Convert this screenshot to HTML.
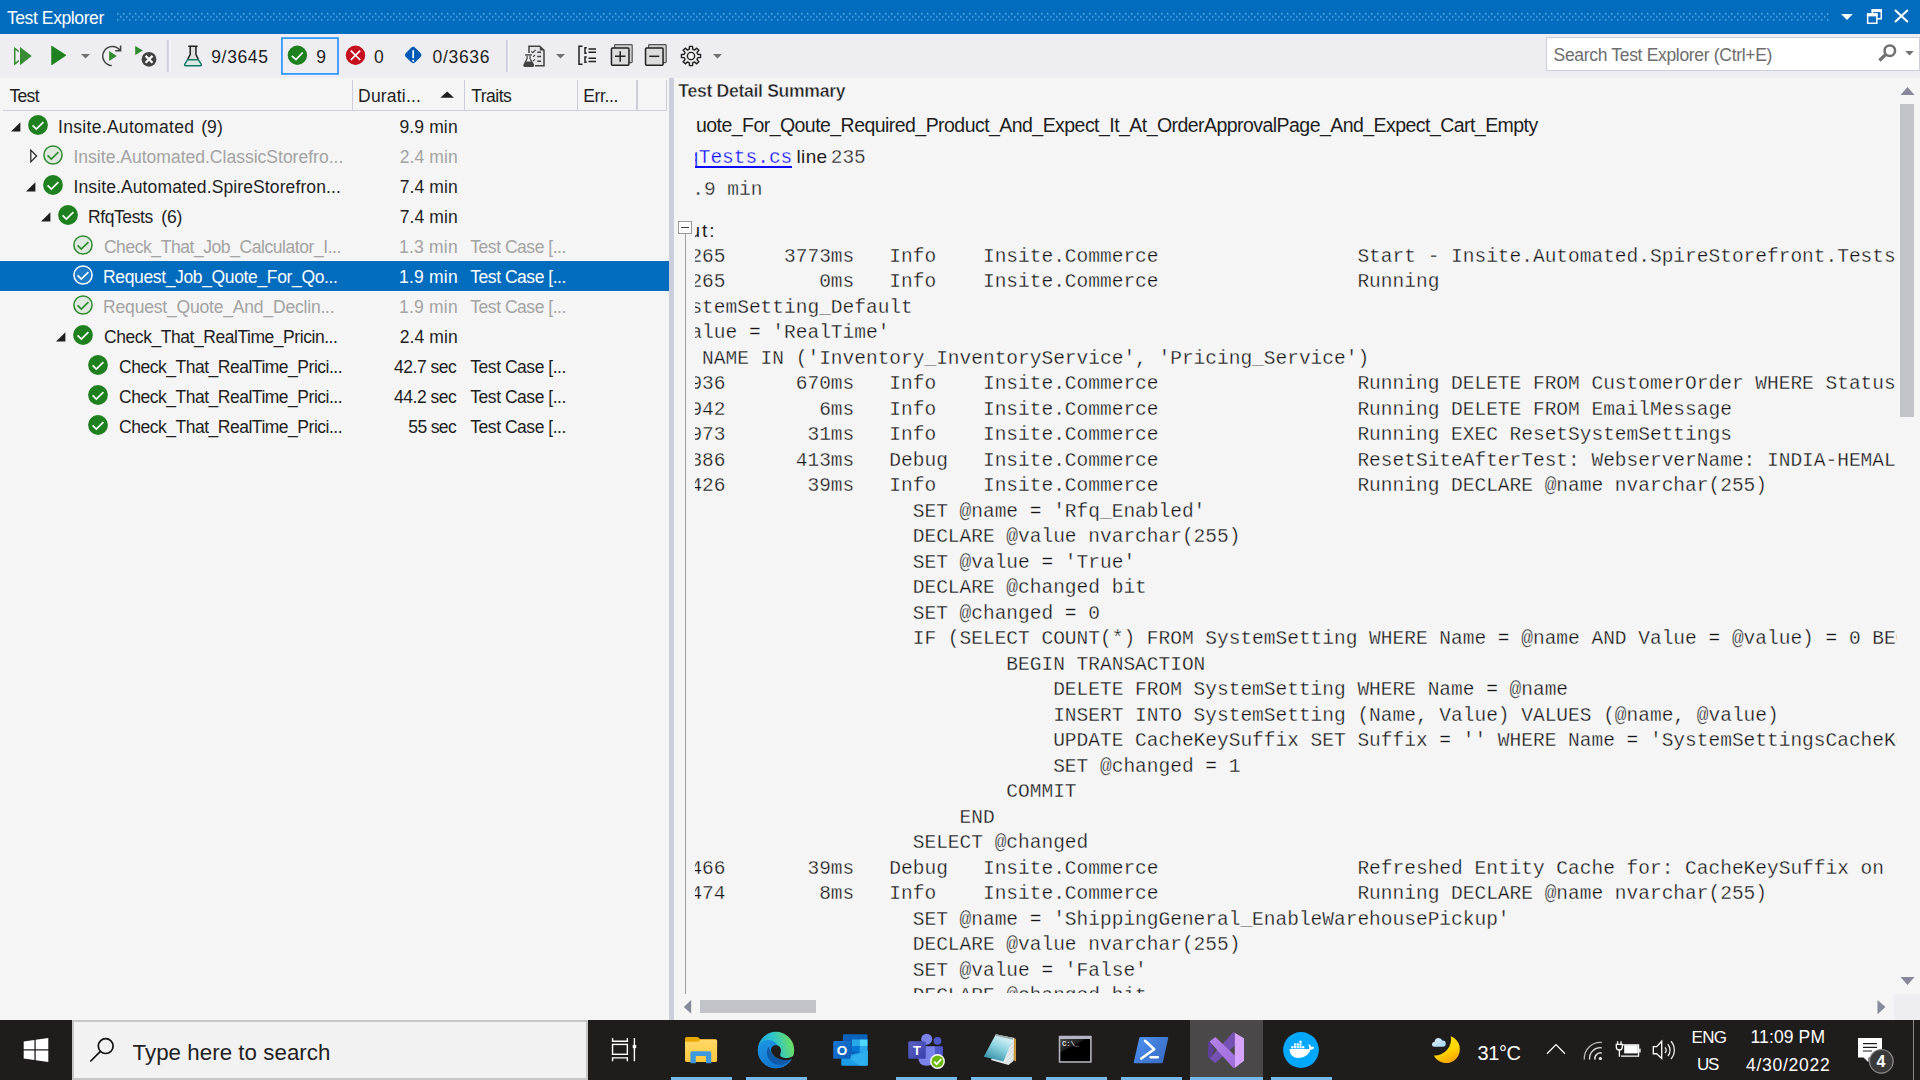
<!DOCTYPE html>
<html lang="en"><head><meta charset="utf-8"><title>Test Explorer</title>
<style>
*{box-sizing:border-box;margin:0;padding:0}
html,body{width:1920px;height:1080px;overflow:hidden;background:#f5f5f5;font-family:"Liberation Sans",sans-serif;color:#1e1e1e}
.t{position:absolute;white-space:pre;line-height:1}
.abs{position:absolute}
#titlebar{position:absolute;left:0;top:0;width:1920px;height:34px;background:#006cbe}
#toolbar{position:absolute;left:0;top:34px;width:1920px;height:44px;background:#eeeef2}
#left{position:absolute;left:0;top:78px;width:669px;height:942px;background:#f5f5f5;overflow:hidden}
#splitter{position:absolute;left:669px;top:78px;width:4.5px;height:942px;background:#ccceDB}
#right{position:absolute;left:673.5px;top:78px;width:1246.5px;height:942px;background:#f5f5f5;overflow:hidden}
#taskbar{position:absolute;left:0;top:1020px;width:1920px;height:60px;background:#1f1c1c}
.hsep{position:absolute;top:2px;width:1.6px;height:31px;background:#ccceDB}
.row{position:absolute;left:0;width:669px;height:30px}
.row.sel{background:#006cbe}
svg{position:absolute;overflow:visible}
#log{position:absolute;white-space:pre;font-family:"Liberation Mono",monospace;font-size:19.5px;line-height:25.5px;color:#141414;-webkit-text-stroke:0.3px #f5f5f5}
#clip{position:absolute;left:21.5px;top:26px;width:1201.5px;height:889px;overflow:hidden}
</style></head>
<body>
<div id="titlebar"><span class="t" style="left:6.90px;top:9.50px;font-size:17.5px;letter-spacing:-0.399px;color:#fff;">Test Explorer</span><svg id="tb-svg" width="1920" height="34" viewBox="0 0 1920 34"><defs><pattern id="grip" x="117" y="13" width="6" height="6.2" patternUnits="userSpaceOnUse"><rect x="0" y="0" width="1.5" height="1.5" fill="#6aaee6"/><rect x="3" y="3.1" width="1.5" height="1.5" fill="#6aaee6"/></pattern></defs>
<rect x="117" y="13" width="1712" height="7.8" fill="url(#grip)"/>
<path d="M1841.1 14 L1852.8 14 L1846.95 20 Z" fill="#fff"/>
<g fill="none" stroke="#fff" stroke-width="1.5"><rect x="1872.35" y="9.85" width="8.9" height="8.9"/><rect x="1867.65" y="14.05" width="9.2" height="9.2" fill="#006cbe"/></g>
<rect x="1871.6" y="9.1" width="10.4" height="3" fill="#fff"/><rect x="1866.9" y="13.3" width="10.7" height="3.1" fill="#fff"/>
<path d="M1895 9.9 L1907.8 21.9 M1907.8 9.9 L1895 21.9" stroke="#fff" stroke-width="2.1" fill="none"/>
</svg></div>
<div id="toolbar"><span class="t" style="left:211.25px;top:14.75px;font-size:17.5px;letter-spacing:0.641px;color:#1e1e1e;">9/3645</span><span class="t" style="left:316.25px;top:14.75px;font-size:17.5px;color:#1e1e1e;">9</span><span class="t" style="left:374.00px;top:14.75px;font-size:17.5px;color:#1e1e1e;">0</span><span class="t" style="left:432.50px;top:14.75px;font-size:17.5px;letter-spacing:0.691px;color:#1e1e1e;">0/3636</span><div class="abs" id="search" style="left:1545.5px;top:3.1px;width:374.5px;height:33.8px;background:#fff;border:1.9px solid #ccceDB"></div><svg id="tool-svg" style="left:0;top:0" width="1920" height="44" viewBox="0 34 1920 44"><g id="ic-runall"><path d="M14.75 48.4 L14.75 63.9 L25 56.1 Z" fill="none" stroke="#388a34" stroke-width="1.5"/><path d="M20 47 L20 65.25 L31.75 56.1 Z" fill="#388a34" stroke="#eeeef2" stroke-width="2.4" paint-order="stroke"/></g>
<path id="ic-run" d="M51.25 46.3 Q51.25 45.4 52.1 45.9 L65.8 54.8 Q66.5 55.3 65.8 55.8 L52.1 64.9 Q51.25 65.4 51.25 64.6 Z" fill="#1f801f"/>
<path d="M81 54 L90 54 L85.5 58.6 Z" fill="#717171"/>
<g id="ic-repeat"><path d="M120.3 50.6 A9.6 9.6 0 1 0 111.8 65.6" fill="none" stroke="#424242" stroke-width="1.45"/><path d="M120.6 45.5 L120.6 50.8 L115.2 50.8" fill="none" stroke="#424242" stroke-width="1.5"/><path d="M109.1 51.1 L109.1 60.9 L116.8 56.1 Z" fill="#2e8b2e"/></g>
<g id="ic-runx"><path d="M135.2 46.1 L135.2 54.9 L142.9 50.4 Z" fill="#2e8b2e"/><circle cx="149" cy="59.35" r="7.4" fill="#424242" stroke="#eeeef2" stroke-width="1.6" paint-order="stroke"/><path d="M145.6 55.9 L152.5 62.8 M152.5 55.9 L145.6 62.8" stroke="#fff" stroke-width="2.2" fill="none"/></g>
<rect x="167" y="40" width="1.9" height="32" fill="#ccceDB"/><rect x="168.9" y="40" width="1.6" height="32" fill="#f7f7f9"/>
<g id="ic-flask"><path d="M190.2 47 L190.2 54.5 L187.5 59.4 L198.2 59.4 L195.95 54.5 L195.95 47 Z" fill="#e0e0e0"/><path d="M188.25 46.25 L197.5 46.25 M190.2 47 L190.2 54.6 L187.7 59.2 M195.95 47 L195.95 54.6 L198.3 59.2" fill="none" stroke="#212121" stroke-width="1.5"/><path d="M187.6 59.7 L198.3 59.7 L201.3 64.4 Q201.8 65.75 200.3 65.75 L185.7 65.75 Q184.2 65.75 184.7 64.4 Z" fill="#dce8e4" stroke="#117865" stroke-width="1.5" stroke-linejoin="round"/></g>
<rect x="281.9" y="38.1" width="56.1" height="35.8" fill="none" stroke="#3399ff" stroke-width="1.8"/>
<g id="ic-pass"><circle cx="297.4" cy="55.25" r="9.7" fill="#1f801f"/><path d="M291.8 55.8 L296 59.6 L302.7 52.5" fill="none" stroke="#fff" stroke-width="1.7"/></g>
<g id="ic-fail"><circle cx="355.5" cy="55.25" r="9.7" fill="#c50f1f"/><path d="M350.8 50.6 L360.2 60 M360.2 50.6 L350.8 60" fill="none" stroke="#fff" stroke-width="1.7"/></g>
<g id="ic-notrun"><rect x="406.6" y="48.4" width="13.2" height="13.2" rx="3.2" transform="rotate(45 413.2 55)" fill="#005ab5"/><path d="M413.2 50.2 L413.2 58.2" stroke="#fff" stroke-width="1.7"/><circle cx="413.2" cy="60.7" r="1" fill="#fff"/></g>
<rect x="506" y="40" width="1.9" height="32" fill="#ccceDB"/><rect x="507.9" y="40" width="1.6" height="32" fill="#f7f7f9"/>
<g id="ic-playlist"><path d="M529 53 L529 46.25 L539.8 46.25 L544 50.4 L544 65.75 L535 65.75 L535 53 Z" fill="#e6e6ea"/><path d="M529 53 L529 46.25 L539.8 46.25 L544 50.4 L544 65.75 L535 65.75" fill="none" stroke="#424242" stroke-width="1.5"/><path d="M539.8 46.25 L539.8 50.4 L544 50.4 Z" fill="#424242"/><path d="M537.25 52.25 H541 M537.25 56.5 H541 M537.25 61.25 H541" stroke="#424242" stroke-width="1.3"/><path d="M531.3 51.4 L532.7 52.7 L535.6 50 M533 56.8 L535 55 M533 61.2 L535 59.4" fill="none" stroke="#424242" stroke-width="1.1"/><path d="M525 54.9 H532" stroke="#424242" stroke-width="1.3"/><path d="M527.1 55.5 V58.6 L524 64.6 Q523.5 66.5 525 66.5 L532.3 66.5 Q534 66.5 533.4 64.6 L530 58.6 V55.5" fill="none" stroke="#424242" stroke-width="1.2"/><path d="M525.6 61.6 L531.6 61.6 L533.4 64.6 Q534 66.5 532.3 66.5 L525 66.5 Q523.5 66.5 524 64.6 Z" fill="#424242"/></g>
<path d="M556 54 L565 54 L560.5 58.6 Z" fill="#717171"/>
<g id="ic-group" fill="none" stroke="#212121" stroke-width="1.5"><path d="M582.5 46.25 H579 V64.3 H582.5"/><path d="M586.75 47.75 H585 V53.3 H586.75 M586.75 57 H585 V62.3 H586.75"/><path d="M588.5 49.1 H596 M588.5 52.25 H596 M588.5 58.25 H596 M588.5 61.4 H596"/></g>
<g id="ic-expand"><rect x="614.6" y="44.7" width="17.6" height="17.9" rx="0.8" fill="#d0d0d0" stroke="#555" stroke-width="1.2"/><rect x="611.45" y="48.05" width="17.5" height="17.2" rx="1" fill="#dcdcdc" stroke="#212121" stroke-width="1.5"/><path d="M615 56.3 H625.5 M620.2 51.3 V61.7" stroke="#212121" stroke-width="1.5"/></g>
<g id="ic-collapse"><rect x="648.6" y="44.7" width="17.6" height="17.9" rx="0.8" fill="#d0d0d0" stroke="#555" stroke-width="1.2"/><rect x="645.55" y="48.05" width="17.5" height="17.2" rx="1" fill="#dcdcdc" stroke="#212121" stroke-width="1.5"/><path d="M649.2 56.3 H659.3" stroke="#212121" stroke-width="1.5"/></g>
<g id="ic-gear"><path d="M689.34 49.20 L689.45 46.42 L692.55 46.42 L692.66 49.20 L694.63 50.02 L696.68 48.14 L698.86 50.32 L696.98 52.37 L697.80 54.34 L700.58 54.45 L700.58 57.55 L697.80 57.66 L696.98 59.63 L698.86 61.68 L696.68 63.86 L694.63 61.98 L692.66 62.80 L692.55 65.58 L689.45 65.58 L689.34 62.80 L687.37 61.98 L685.32 63.86 L683.14 61.68 L685.02 59.63 L684.20 57.66 L681.42 57.55 L681.42 54.45 L684.20 54.34 L685.02 52.37 L683.14 50.32 L685.32 48.14 L687.37 50.02 Z" fill="#e8e8e8" stroke="#212121" stroke-width="1.4" stroke-linejoin="round"/><circle cx="691" cy="56" r="3.6" fill="#f4f4f4" stroke="#212121" stroke-width="1.4"/></g>
<path d="M713 54 L721.9 54 L717.45 58.6 Z" fill="#717171"/>
<g id="ic-search"><circle cx="1889.8" cy="50.7" r="5.25" fill="none" stroke="#717171" stroke-width="2.6"/><path d="M1886 54.3 L1879.4 60.5" stroke="#717171" stroke-width="3.3"/></g>
<path d="M1905.2 50.9 L1913.75 50.9 L1909.5 55.5 Z" fill="#717171"/>
</svg><span class="t" style="left:1553.60px;top:13.40px;font-size:17.5px;letter-spacing:-0.322px;color:#6d6d6d;">Search Test Explorer (Ctrl+E)</span></div>
<div id="left"><div class="abs" id="hdr" style="left:0;top:0;width:669px;height:33px"><div class="hsep" style="left:351.6px"></div><div class="hsep" style="left:463.9px"></div><div class="hsep" style="left:576.8px"></div><div class="hsep" style="left:636.4px"></div><div class="hsep" style="left:665.5px"></div><div class="abs" style="left:3px;top:31.6px;width:664px;height:1.5px;background:#ccceDB"></div><span class="t" style="left:9.40px;top:9.90px;font-size:17.5px;letter-spacing:-0.628px;color:#1e1e1e;">Test</span><span class="t" style="left:358.10px;top:9.90px;font-size:17.5px;letter-spacing:0.187px;color:#1e1e1e;">Durati...</span><span class="t" style="left:471.30px;top:9.90px;font-size:17.5px;letter-spacing:-0.530px;color:#1e1e1e;">Traits</span><span class="t" style="left:583.30px;top:9.90px;font-size:17.5px;letter-spacing:-0.377px;color:#1e1e1e;">Err...</span><svg style="left:440px;top:13px" width="15" height="8" viewBox="440 91 15 8"><path d="M440.3 97.8 L447.15 91.4 L454 97.8 Z" fill="#1e1e1e"/></svg></div><div class="row" style="top:33px"><svg style="left:10.9px;top:11px" width="10" height="10" viewBox="0 0 10 10"><path d="M9.4 0.2 L9.4 9.5 L0 9.5 Z" fill="#1e1e1e"/></svg><svg style="left:27.4px;top:3.4px" width="22" height="22" viewBox="0 0 22 22"><circle cx="11" cy="11" r="9.9" fill="#1f801f"/><path d="M5.6 11.3 L9.3 15 L16.4 8.1" fill="none" stroke="#fff" stroke-width="1.7"/></svg><span class="t" style="left:58.10px;top:7.75px;font-size:17.5px;letter-spacing:0.300px;color:#1e1e1e;">Insite.Automated</span><span class="t" style="left:201.20px;top:7.75px;font-size:17.5px;letter-spacing:0.070px;color:#1e1e1e;">(9)</span><span class="t" style="left:399.40px;top:7.75px;font-size:17.5px;letter-spacing:0.141px;color:#1e1e1e;">9.9 min</span></div><div class="row" style="top:63px"><svg style="left:30.2px;top:8px" width="8" height="14" viewBox="0 0 8 14"><path d="M0.8 1.2 L6.6 7 L0.8 12.8 Z" fill="#f5f5f5" stroke="#1e1e1e" stroke-width="1.2"/></svg><svg style="left:42.4px;top:3.4px" width="22" height="22" viewBox="0 0 22 22"><circle cx="11" cy="11" r="9.1" fill="#dfe9df" stroke="#2f8a2f" stroke-width="1.5"/><path d="M5.6 11.3 L9.3 15 L16.4 8.1" fill="none" stroke="#2f8a2f" stroke-width="1.7"/></svg><span class="t" style="left:73.50px;top:7.75px;font-size:17.5px;letter-spacing:0.010px;color:#a3a3a3;">Insite.Automated.ClassicStorefro...</span><span class="t" style="left:399.80px;top:7.75px;font-size:17.5px;letter-spacing:0.074px;color:#a3a3a3;">2.4 min</span></div><div class="row" style="top:93px"><svg style="left:25.9px;top:11px" width="10" height="10" viewBox="0 0 10 10"><path d="M9.4 0.2 L9.4 9.5 L0 9.5 Z" fill="#1e1e1e"/></svg><svg style="left:42.4px;top:3.4px" width="22" height="22" viewBox="0 0 22 22"><circle cx="11" cy="11" r="9.9" fill="#1f801f"/><path d="M5.6 11.3 L9.3 15 L16.4 8.1" fill="none" stroke="#fff" stroke-width="1.7"/></svg><span class="t" style="left:73.50px;top:7.75px;font-size:17.5px;letter-spacing:0.114px;color:#1e1e1e;">Insite.Automated.SpireStorefron...</span><span class="t" style="left:399.80px;top:7.75px;font-size:17.5px;letter-spacing:0.074px;color:#1e1e1e;">7.4 min</span></div><div class="row" style="top:123px"><svg style="left:40.9px;top:11px" width="10" height="10" viewBox="0 0 10 10"><path d="M9.4 0.2 L9.4 9.5 L0 9.5 Z" fill="#1e1e1e"/></svg><svg style="left:57.4px;top:3.4px" width="22" height="22" viewBox="0 0 22 22"><circle cx="11" cy="11" r="9.9" fill="#1f801f"/><path d="M5.6 11.3 L9.3 15 L16.4 8.1" fill="none" stroke="#fff" stroke-width="1.7"/></svg><span class="t" style="left:88.10px;top:7.75px;font-size:17.5px;letter-spacing:-0.432px;color:#1e1e1e;">RfqTests</span><span class="t" style="left:161.20px;top:7.75px;font-size:17.5px;letter-spacing:-0.080px;color:#1e1e1e;">(6)</span><span class="t" style="left:399.80px;top:7.75px;font-size:17.5px;letter-spacing:0.074px;color:#1e1e1e;">7.4 min</span></div><div class="row" style="top:153px"><svg style="left:72.4px;top:3.4px" width="22" height="22" viewBox="0 0 22 22"><circle cx="11" cy="11" r="9.1" fill="#dfe9df" stroke="#2f8a2f" stroke-width="1.5"/><path d="M5.6 11.3 L9.3 15 L16.4 8.1" fill="none" stroke="#2f8a2f" stroke-width="1.7"/></svg><span class="t" style="left:103.90px;top:7.75px;font-size:17.5px;letter-spacing:-0.432px;color:#a3a3a3;">Check_That_Job_Calculator_I...</span><span class="t" style="left:399.10px;top:7.75px;font-size:17.5px;letter-spacing:0.191px;color:#a3a3a3;">1.3 min</span><span class="t" style="left:470.30px;top:7.75px;font-size:17.5px;letter-spacing:-0.466px;color:#a3a3a3;">Test Case [...</span></div><div class="row sel" style="top:183px"><svg style="left:72.4px;top:3.4px" width="22" height="22" viewBox="0 0 22 22"><circle cx="11" cy="11" r="9.1" fill="#1f7cc8" stroke="#fff" stroke-width="1.5"/><path d="M5.6 11.3 L9.3 15 L16.4 8.1" fill="none" stroke="#fff" stroke-width="1.7"/></svg><span class="t" style="left:103.10px;top:7.75px;font-size:17.5px;letter-spacing:-0.362px;color:#fff;">Request_Job_Quote_For_Qo...</span><span class="t" style="left:399.10px;top:7.75px;font-size:17.5px;letter-spacing:0.191px;color:#fff;">1.9 min</span><span class="t" style="left:470.30px;top:7.75px;font-size:17.5px;letter-spacing:-0.466px;color:#fff;">Test Case [...</span></div><div class="row" style="top:213px"><svg style="left:72.4px;top:3.4px" width="22" height="22" viewBox="0 0 22 22"><circle cx="11" cy="11" r="9.1" fill="#dfe9df" stroke="#2f8a2f" stroke-width="1.5"/><path d="M5.6 11.3 L9.3 15 L16.4 8.1" fill="none" stroke="#2f8a2f" stroke-width="1.7"/></svg><span class="t" style="left:103.10px;top:7.75px;font-size:17.5px;letter-spacing:-0.186px;color:#a3a3a3;">Request_Quote_And_Declin...</span><span class="t" style="left:399.10px;top:7.75px;font-size:17.5px;letter-spacing:0.191px;color:#a3a3a3;">1.9 min</span><span class="t" style="left:470.30px;top:7.75px;font-size:17.5px;letter-spacing:-0.466px;color:#a3a3a3;">Test Case [...</span></div><div class="row" style="top:243px"><svg style="left:55.9px;top:11px" width="10" height="10" viewBox="0 0 10 10"><path d="M9.4 0.2 L9.4 9.5 L0 9.5 Z" fill="#1e1e1e"/></svg><svg style="left:72.4px;top:3.4px" width="22" height="22" viewBox="0 0 22 22"><circle cx="11" cy="11" r="9.9" fill="#1f801f"/><path d="M5.6 11.3 L9.3 15 L16.4 8.1" fill="none" stroke="#fff" stroke-width="1.7"/></svg><span class="t" style="left:104.10px;top:7.75px;font-size:17.5px;letter-spacing:-0.451px;color:#1e1e1e;">Check_That_RealTime_Pricin...</span><span class="t" style="left:399.80px;top:7.75px;font-size:17.5px;letter-spacing:0.074px;color:#1e1e1e;">2.4 min</span></div><div class="row" style="top:273px"><svg style="left:87.4px;top:3.4px" width="22" height="22" viewBox="0 0 22 22"><circle cx="11" cy="11" r="9.9" fill="#1f801f"/><path d="M5.6 11.3 L9.3 15 L16.4 8.1" fill="none" stroke="#fff" stroke-width="1.7"/></svg><span class="t" style="left:119.10px;top:7.75px;font-size:17.5px;letter-spacing:-0.489px;color:#1e1e1e;">Check_That_RealTime_Prici...</span><span class="t" style="left:394.10px;top:7.75px;font-size:17.5px;letter-spacing:-0.515px;color:#1e1e1e;">42.7 sec</span><span class="t" style="left:470.30px;top:7.75px;font-size:17.5px;letter-spacing:-0.466px;color:#1e1e1e;">Test Case [...</span></div><div class="row" style="top:303px"><svg style="left:87.4px;top:3.4px" width="22" height="22" viewBox="0 0 22 22"><circle cx="11" cy="11" r="9.9" fill="#1f801f"/><path d="M5.6 11.3 L9.3 15 L16.4 8.1" fill="none" stroke="#fff" stroke-width="1.7"/></svg><span class="t" style="left:119.10px;top:7.75px;font-size:17.5px;letter-spacing:-0.489px;color:#1e1e1e;">Check_That_RealTime_Prici...</span><span class="t" style="left:394.10px;top:7.75px;font-size:17.5px;letter-spacing:-0.515px;color:#1e1e1e;">44.2 sec</span><span class="t" style="left:470.30px;top:7.75px;font-size:17.5px;letter-spacing:-0.466px;color:#1e1e1e;">Test Case [...</span></div><div class="row" style="top:333px"><svg style="left:87.4px;top:3.4px" width="22" height="22" viewBox="0 0 22 22"><circle cx="11" cy="11" r="9.9" fill="#1f801f"/><path d="M5.6 11.3 L9.3 15 L16.4 8.1" fill="none" stroke="#fff" stroke-width="1.7"/></svg><span class="t" style="left:119.10px;top:7.75px;font-size:17.5px;letter-spacing:-0.489px;color:#1e1e1e;">Check_That_RealTime_Prici...</span><span class="t" style="left:408.30px;top:7.75px;font-size:17.5px;letter-spacing:-0.642px;color:#1e1e1e;">55 sec</span><span class="t" style="left:470.30px;top:7.75px;font-size:17.5px;letter-spacing:-0.466px;color:#1e1e1e;">Test Case [...</span></div></div>
<div id="splitter"></div>
<div id="right"><span class="t" style="left:4.80px;top:4.80px;font-size:17.6px;letter-spacing:-0.309px;color:#1e1e1e;font-weight:700;-webkit-text-stroke:0.4px #f5f5f5;">Test Detail Summary</span><div id="clip"><span class="t" style="left:1.00px;top:12.20px;font-size:19.5px;letter-spacing:-0.549px;color:#1e1e1e;">uote_For_Qoute_Required_Product_And_Expect_It_At_OrderApprovalPage_And_Expect_Cart_Empty</span><span class="t" style="left:-8.00px;top:44.60px;font-size:19.5px;color:#0a0aff;font-family:'Liberation Mono', monospace;-webkit-text-stroke:0.3px #f5f5f5;">qTests.cs</span><div class="abs" style="left:0;top:62.3px;width:97.3px;height:1.5px;background:#0a0aff"></div><span class="t" style="left:101.50px;top:42.60px;font-size:19px;letter-spacing:0.364px;color:#1e1e1e;">line</span><span class="t" style="left:135.70px;top:44.60px;font-size:19.5px;color:#1e1e1e;font-family:'Liberation Mono', monospace;-webkit-text-stroke:0.3px #f5f5f5;">235</span><span class="t" style="left:-14.50px;top:76.70px;font-size:19.5px;color:#1e1e1e;font-family:'Liberation Mono', monospace;-webkit-text-stroke:0.3px #f5f5f5;">1.9 min</span><span class="t" style="left:-5.60px;top:117.10px;font-size:19px;letter-spacing:2.027px;color:#1e1e1e;">ut:</span><pre id="log" style="left:-4.60px;top:115.05px"> 
265     3773ms   Info    Insite.Commerce                 Start - Insite.Automated.SpireStorefront.Tests
265        0ms   Info    Insite.Commerce                 Running
stemSetting_Default
alue = 'RealTime'
 NAME IN ('Inventory_InventoryService', 'Pricing_Service')
936      670ms   Info    Insite.Commerce                 Running DELETE FROM CustomerOrder WHERE Status
942        6ms   Info    Insite.Commerce                 Running DELETE FROM EmailMessage
973       31ms   Info    Insite.Commerce                 Running EXEC ResetSystemSettings
386      413ms   Debug   Insite.Commerce                 ResetSiteAfterTest: WebserverName: INDIA-HEMAL
426       39ms   Info    Insite.Commerce                 Running DECLARE @name nvarchar(255)
                   SET @name = 'Rfq_Enabled'
                   DECLARE @value nvarchar(255)
                   SET @value = 'True'
                   DECLARE @changed bit
                   SET @changed = 0
                   IF (SELECT COUNT(*) FROM SystemSetting WHERE Name = @name AND Value = @value) = 0 BEGIN
                           BEGIN TRANSACTION
                               DELETE FROM SystemSetting WHERE Name = @name
                               INSERT INTO SystemSetting (Name, Value) VALUES (@name, @value)
                               UPDATE CacheKeySuffix SET Suffix = '' WHERE Name = 'SystemSettingsCacheKeySuffix'
                               SET @changed = 1
                           COMMIT
                       END
                   SELECT @changed
466       39ms   Debug   Insite.Commerce                 Refreshed Entity Cache for: CacheKeySuffix on
474        8ms   Info    Insite.Commerce                 Running DECLARE @name nvarchar(255)
                   SET @name = 'ShippingGeneral_EnableWarehousePickup'
                   DECLARE @value nvarchar(255)
                   SET @value = 'False'
                   DECLARE @changed bit</pre></div><div class="abs" style="left:11.1px;top:156.0px;width:1.3px;height:760px;background:#a0a0a0"></div><div class="abs" style="left:4.8px;top:142.7px;width:13.4px;height:13.5px;background:#fcfcfc;border:1.3px solid #9a9a9a"></div><div class="abs" style="left:7.7px;top:148.8px;width:7.4px;height:1.5px;background:#3c3c3c"></div><div class="abs" style="left:1226.5px;top:26.0px;width:13.9px;height:312.8px;background:#c2c3c9"></div><div class="abs" style="left:26.5px;top:922.0px;width:115.8px;height:13.3px;background:#c2c3c9"></div><div class="abs" style="left:1220.7px;top:916.0px;width:26px;height:26px;background:#eeeef2"></div><svg style="left:0;top:0" width="1246.5" height="942" viewBox="673.5 78 1246.5 942"><g fill="#868999"><path d="M1900 95 L1907 87 L1914 95 Z"/><path d="M1900 977 L1914 977 L1907 985 Z"/><path d="M690.7 1000 L690.7 1013.8 L683.3 1006.9 Z"/><path d="M1877 1000 L1877 1014.2 L1885 1007.1 Z"/></g></svg></div>
<div id="taskbar"><div class="abs" id="tsearch" style="left:72px;top:0;width:516px;height:60px;background:#f2f2f2;border:2px solid #c6c6c6"></div><span class="t" style="left:132.50px;top:21.70px;font-size:22.3px;letter-spacing:0.046px;color:#222;">Type here to search</span><div class="abs" style="left:1190px;top:0;width:73px;height:60px;background:#4a4848"></div><div class="abs run" style="left:671.0px;top:57px;width:61.0px;height:3px;background:#76b9ed"></div><div class="abs run" style="left:745.8px;top:57px;width:61.2px;height:3px;background:#76b9ed"></div><div class="abs run" style="left:896.0px;top:57px;width:61.0px;height:3px;background:#76b9ed"></div><div class="abs run" style="left:971.0px;top:57px;width:61.0px;height:3px;background:#76b9ed"></div><div class="abs run" style="left:1045.8px;top:57px;width:61.2px;height:3px;background:#76b9ed"></div><div class="abs run" style="left:1120.8px;top:57px;width:61.2px;height:3px;background:#76b9ed"></div><div class="abs run" style="left:1190.0px;top:57px;width:73.0px;height:3px;background:#76b9ed"></div><div class="abs run" style="left:1271.0px;top:57px;width:61.0px;height:3px;background:#76b9ed"></div><svg id="task-svg" style="left:0;top:0" width="1920" height="60" viewBox="0 1020 1920 60"><defs>
<linearGradient id="g-fold" x1="0" y1="0" x2="0" y2="1"><stop offset="0" stop-color="#ffd968"/><stop offset="1" stop-color="#ffc83d"/></linearGradient>
<linearGradient id="g-edge1" x1="0" y1="0.6" x2="1" y2="0.3"><stop offset="0" stop-color="#1b9de2"/><stop offset="0.5" stop-color="#2ec4cc"/><stop offset="1" stop-color="#6fe05a"/></linearGradient>
<linearGradient id="g-edge2" x1="0" y1="0" x2="0.6" y2="1"><stop offset="0" stop-color="#1c97e3"/><stop offset="1" stop-color="#1273cc"/></linearGradient>
<linearGradient id="g-ol" x1="0" y1="0" x2="1" y2="1"><stop offset="0" stop-color="#1a78d8"/><stop offset="1" stop-color="#0a5cb6"/></linearGradient>
<linearGradient id="g-tm" x1="0" y1="0" x2="1" y2="1"><stop offset="0" stop-color="#5a62c3"/><stop offset="1" stop-color="#3940ab"/></linearGradient>
<linearGradient id="g-np" x1="0.7" y1="0" x2="0.2" y2="1"><stop offset="0" stop-color="#e8f7fa"/><stop offset="0.45" stop-color="#8fd3e0"/><stop offset="1" stop-color="#2c8aa3"/></linearGradient>
<linearGradient id="g-cmd" x1="0" y1="0" x2="0.5" y2="0.7"><stop offset="0" stop-color="#4a4a4a"/><stop offset="0.55" stop-color="#1c1c1c"/><stop offset="0.6" stop-color="#000"/></linearGradient>
<linearGradient id="g-ps" x1="0" y1="0" x2="1" y2="0.6"><stop offset="0" stop-color="#4f93f5"/><stop offset="1" stop-color="#3a6fc6"/></linearGradient>
<linearGradient id="g-vs1" x1="0" y1="0" x2="1" y2="1"><stop offset="0" stop-color="#b583ea"/><stop offset="1" stop-color="#9f6ddb"/></linearGradient>
<linearGradient id="g-moon" x1="0.3" y1="0" x2="0.7" y2="1"><stop offset="0" stop-color="#ffe600"/><stop offset="0.55" stop-color="#ffd500"/><stop offset="1" stop-color="#ff9d00"/></linearGradient>
<linearGradient id="g-cloud" x1="0" y1="0" x2="1" y2="1"><stop offset="0" stop-color="#e6f4fd"/><stop offset="1" stop-color="#9fd2f3"/></linearGradient>
</defs>
<g id="tk-win" fill="#fff"><path d="M23.7 1041.4 L34.4 1039.9 V1049.3 H23.7 Z"/><path d="M35.7 1039.7 L48.3 1038 V1049.3 H35.7 Z"/><path d="M23.7 1050.6 H34.4 V1060.1 L23.7 1058.6 Z"/><path d="M35.7 1050.6 H48.3 V1062 L35.7 1060.3 Z"/></g>
<g id="tk-search" fill="none" stroke="#111" stroke-width="1.7"><circle cx="105.7" cy="1046.1" r="7.4"/><path d="M100.4 1051.4 L90.3 1061.5"/></g>
<g id="tk-taskview" fill="none" stroke="#fff" stroke-width="1.4"><rect x="612.55" y="1044.4" width="14.8" height="9.9"/><path d="M612.55 1037.9 V1041.2 H627.35 V1037.9 M612.55 1061.2 V1057.9 H627.35 V1061.2 M634.4 1037.9 V1061.2"/><rect x="632.7" y="1045" width="3.5" height="3.2" fill="#fff" stroke="none"/></g>
<g id="tk-explorer"><path d="M685 1038.6 Q685 1037 686.6 1037 L697 1037 Q698 1037 698.8 1037.8 L700.2 1039.2 L715.5 1039.2 Q717.1 1039.2 717.1 1040.8 L717.1 1044 L685 1044 Z" fill="#e8a800"/><path d="M685 1041.8 L697.2 1041.8 Q698.2 1041.8 699 1041 L700.4 1039.5 L715.5 1039.5 Q717.1 1039.5 717.1 1041 L717.1 1060.6 Q717.1 1062 715.6 1062 L686.5 1062 Q685 1062 685 1060.6 Z" fill="url(#g-fold)"/><path d="M690.4 1053 Q690.4 1051.25 692 1051.25 L709.6 1051.25 Q711.25 1051.25 711.25 1053 L711.25 1063.2 L706 1063.2 L706 1056 L695.8 1056 L695.8 1063.2 L690.4 1063.2 Z" fill="#3e9ae0"/></g>
<g id="tk-edge" transform="translate(776 1050)"><circle r="18.2" fill="url(#g-edge1)"/><path d="M-18.2 0 C-18 -6 -13 -10 -8 -10 C-3 -10 1 -7 2 -3 L-5 0 C-5 4 -2 7 3 9 L15.7 9.3 A18.2 18.2 0 0 1 -18.2 0 Z" fill="url(#g-edge2)"/><path d="M-7 -3.5 C-10.5 1 -9.5 7 -5 11.5 C0 16 9 16.5 15.7 9.3 C11 11.5 5 10.5 1 8 C-3 5.5 -6.5 2 -7 -3.5 Z" fill="#0f5aa8"/><path d="M0 -4.8 C3 -4.8 5 -2.5 5 0.5 C5 3 3.5 4.5 4.5 6 C6 8 10 8.3 13 7.8 C15 7.4 17 6.3 18.6 4.8 L19.4 9 L15.7 9.3 C12 10.8 6 10.5 2 8.5 C-2 6.5 -5 3.5 -5 0 C-5 -3 -3 -4.8 0 -4.8 Z" fill="#1f1c1c"/></g>
<g id="tk-outlook"><rect x="842.9" y="1034.2" width="24.6" height="24" rx="1.2" fill="#0a63bc"/><rect x="842.9" y="1039.5" width="9.2" height="17.5" fill="#0f5fb5"/><rect x="852" y="1039.5" width="7.6" height="6.5" fill="#28a8ea"/><rect x="859.6" y="1039.5" width="7.9" height="6.5" fill="#50d9ff"/><rect x="852" y="1046" width="7.6" height="6" fill="#0078d4"/><rect x="859.6" y="1046" width="7.9" height="6" fill="#28a8ea"/><rect x="852" y="1052" width="7.6" height="5.5" fill="#0a5aae"/><rect x="859.6" y="1052" width="7.9" height="5.5" fill="#1490df"/><path d="M841.2 1057 L867.8 1050.5 L867.8 1064.4 Q867.8 1065.8 866.4 1065.8 L842.6 1065.8 Q841.2 1065.8 841.2 1064.4 Z" fill="#1a9ce6"/><path d="M867.8 1050.5 L867.8 1064.4 Q867.8 1065.8 866.4 1065.8 L860 1065.8 L848 1057.5 Z" fill="#35b6f2" opacity="0.75"/><rect x="833.2" y="1041" width="17.6" height="17.75" rx="1.6" fill="url(#g-ol)"/><text x="842" y="1054.6" font-family="Liberation Sans, sans-serif" font-weight="700" font-size="13.5" fill="#fff" text-anchor="middle">O</text></g>
<g id="tk-teams"><circle cx="937.5" cy="1040.8" r="3.9" fill="#5059c9"/><path d="M932 1046.25 H941.6 Q942.9 1046.25 942.9 1047.6 V1054 Q942.9 1060 937.5 1060 Q932 1060 932 1054 Z" fill="#5059c9"/><circle cx="926.7" cy="1039.2" r="5.5" fill="#7b83eb"/><path d="M918.3 1046.25 H933.6 Q935 1046.25 935 1047.7 V1057 Q935 1065.8 926.6 1065.8 Q918.3 1065.8 918.3 1057 Z" fill="#7b83eb"/><rect x="908.2" y="1041.25" width="17.6" height="17.5" rx="1.6" fill="url(#g-tm)"/><text x="917" y="1054.6" font-family="Liberation Sans, sans-serif" font-weight="700" font-size="13" fill="#fff" text-anchor="middle">T</text><circle cx="937.5" cy="1061.5" r="7.4" fill="#fff"/><circle cx="937.5" cy="1061.5" r="6" fill="#6bb700"/><path d="M934 1061.6 L936.7 1064.2 L941.3 1059.2" fill="none" stroke="#fff" stroke-width="1.7"/></g>
<g id="tk-notepad"><path d="M1013 1037.5 L1016 1039 L1016 1061.5 L1013 1060 Z" fill="#c8963c"/><path d="M1003 1036 L1014 1038 L1013.5 1061 L1008.5 1065 L991 1060 Z" fill="#e4ecee"/><path d="M1010 1046 L1013.6 1042 M1008 1052 L1013.6 1046 M1006 1058 L1013.6 1050 M1005.5 1063 L1013.5 1054 M1009 1064 L1013.5 1058.5" stroke="#b9c6cc" stroke-width="0.6" fill="none"/><path d="M995.8 1034.2 L1013.3 1038 L1003.5 1061.5 L983.75 1056.7 Z" fill="url(#g-np)"/><path d="M996 1034.2 L1013.3 1038 L1012.6 1039.8 L995.3 1035.8 Z" fill="#9aa7ab"/></g>
<g id="tk-cmd"><rect x="1058.75" y="1035.8" width="32.95" height="26.9" rx="0.8" fill="#b4b4c2"/><rect x="1060.3" y="1039" width="29.8" height="22.2" fill="url(#g-cmd)"/><text x="1062" y="1046.4" font-family="Liberation Mono, monospace" font-weight="700" font-size="7.5" fill="#d8d8d8" letter-spacing="-0.3">C:\_</text></g>
<g id="tk-ps"><path d="M1140.6 1037.1 L1167.2 1037.1 Q1168.5 1037.1 1168.2 1038.3 L1162.9 1062.2 Q1162.6 1063.3 1161.4 1063.3 L1134.8 1063.3 Q1133.5 1063.3 1133.8 1062.1 L1139.2 1038.2 Q1139.5 1037.1 1140.6 1037.1 Z" fill="url(#g-ps)"/><path d="M1145 1040.8 L1154.2 1049.3 L1141.3 1058.5 M1150.6 1057.3 H1157.8" fill="none" stroke="#fff" stroke-width="2.6" stroke-linecap="round" stroke-linejoin="round"/></g>
<g id="tk-vs"><path d="M1208 1043 L1210 1041.3 L1214.2 1050 L1210 1058.8 L1208 1057.2 Z" fill="#5e3f9a"/><path d="M1209.5 1058.5 L1215.4 1063 L1234.8 1045.5 L1234.8 1033 L1233.3 1032 Z" fill="#7551b3"/><path d="M1209.5 1041.5 L1215.4 1037 L1234.8 1055.5 L1234.8 1067.5 L1233.3 1068 Z" fill="url(#g-vs1)"/><path d="M1234.8 1033 L1233.3 1032 L1244 1038.3 L1244 1060.8 L1234.8 1067.9 Z" fill="#d6a3ff"/></g>
<g id="tk-docker" transform="translate(1301 1050)"><circle r="17.9" fill="#00a8ff"/><path d="M-11.4 -1 L8 -1 C8.5 -3 8 -4.5 7 -5.5 C8.5 -6 10 -4.5 10.2 -3 C11.5 -3.5 12.8 -3 13.2 -2.2 C12.5 -0.8 11 -0.3 9.5 -0.5 C8 4 4 8 -3 8 C-8 8 -11.4 4.5 -11.4 -1 Z" fill="#fff"/><g fill="#fff"><rect x="-9.7" y="-3.9" width="2.2" height="2.2"/><rect x="-7" y="-3.9" width="2.2" height="2.2"/><rect x="-4.3" y="-3.9" width="2.2" height="2.2"/><rect x="-1.6" y="-3.9" width="2.2" height="2.2"/><rect x="1.1" y="-3.9" width="2.2" height="2.2"/><rect x="-7" y="-6.6" width="2.2" height="2.2"/><rect x="-4.3" y="-6.6" width="2.2" height="2.2"/><rect x="-1.6" y="-6.6" width="2.2" height="2.2"/><rect x="-1.6" y="-9.3" width="2.2" height="2.2"/></g></g>
<g id="tk-weather"><path d="M1450.8 1036.25 A13.8 13.8 0 1 1 1433.75 1055.4 A16.2 16.2 0 0 0 1450.8 1036.25 Z" fill="url(#g-moon)"/><path d="M1434.5 1046.8 Q1432 1046.8 1432 1044.3 Q1432 1042 1434.6 1041.8 Q1435 1038 1438.6 1038 Q1441.4 1038 1442.2 1040.6 Q1445.8 1040.4 1445.8 1043.8 Q1445.8 1046.8 1443 1046.8 Z" fill="url(#g-cloud)"/></g>
<path id="tk-chev" d="M1547 1053.75 L1556 1044.6 L1565 1053.75" fill="none" stroke="#fff" stroke-width="1.3"/>
<g id="tk-wifi" fill="none" stroke="#fff" stroke-width="1.3"><path d="M1595 1059.6 A5.4 5.4 0 0 1 1601.8 1053.2"/><path d="M1589.6 1059.6 A10.8 10.8 0 0 1 1601.8 1047.8" opacity="0.85"/><path d="M1584.3 1059.6 A16.1 16.1 0 0 1 1601.8 1042.5" opacity="0.7"/><circle cx="1600.4" cy="1058.5" r="1.6" fill="#fff" stroke="none"/></g>
<g id="tk-batt" fill="none" stroke="#fff" stroke-width="1.3"><path d="M1623 1044.85 H1638.55 V1056.05 H1621"/><rect x="1624.2" y="1045.2" width="13.6" height="8.2" fill="#fff" stroke="none"/><rect x="1639.2" y="1048.5" width="1.4" height="4" fill="#fff" stroke="none"/><path d="M1617.6 1041.25 V1044 M1621 1041.25 V1044 M1616.3 1044.4 H1622.3 V1047 Q1622.3 1050 1619.4 1050 Q1616.3 1050 1616.3 1047 Z M1619.4 1050 V1056.7" /></g>
<g id="tk-vol" fill="none" stroke="#fff" stroke-width="1.3"><path d="M1653.3 1046.7 H1656.7 L1661.7 1041.25 V1058.5 L1656.7 1053.75 H1653.3 Z"/><path d="M1665 1047.3 A4.5 4.5 0 0 1 1665 1053.1" opacity="0.9"/><path d="M1667.8 1044.3 A8.7 8.7 0 0 1 1667.8 1056" opacity="0.9"/><path d="M1671 1041.2 A13.5 13.5 0 0 1 1671 1059" opacity="0.9"/></g>
<g id="tk-notif"><path d="M1858 1038 H1882 V1057.5 H1868.5 L1868.5 1062.3 L1863.5 1057.5 H1858 Z" fill="#fff"/><path d="M1863 1043.6 H1877 M1863 1047.3 H1877 M1863 1051 H1872" stroke="#1f1c1c" stroke-width="1.2"/><circle cx="1881.3" cy="1061.3" r="11.8" fill="#3b3a3a" stroke="#8c8c8c" stroke-width="1.2"/></g>
</svg><span class="t" style="left:1477.50px;top:22.70px;font-size:20px;letter-spacing:-0.415px;color:#fff;">31°C</span><span class="t" style="left:1691.50px;top:9.00px;font-size:17px;letter-spacing:-0.658px;color:#fff;">ENG</span><span class="t" style="left:1697.00px;top:36.30px;font-size:17px;letter-spacing:-1.277px;color:#fff;">US</span><span class="t" style="left:1750.50px;top:8.75px;font-size:17.5px;letter-spacing:0.125px;color:#fff;">11:09 PM</span><span class="t" style="left:1746.00px;top:36.60px;font-size:17.5px;letter-spacing:0.735px;color:#fff;">4/30/2022</span><span class="t" style="left:1876.50px;top:34.00px;font-size:16px;color:#fff;font-weight:700;">4</span><div class="abs" style="left:1912.5px;top:0;width:1.3px;height:60px;background:#8a8a8a"></div></div>
</body></html>
